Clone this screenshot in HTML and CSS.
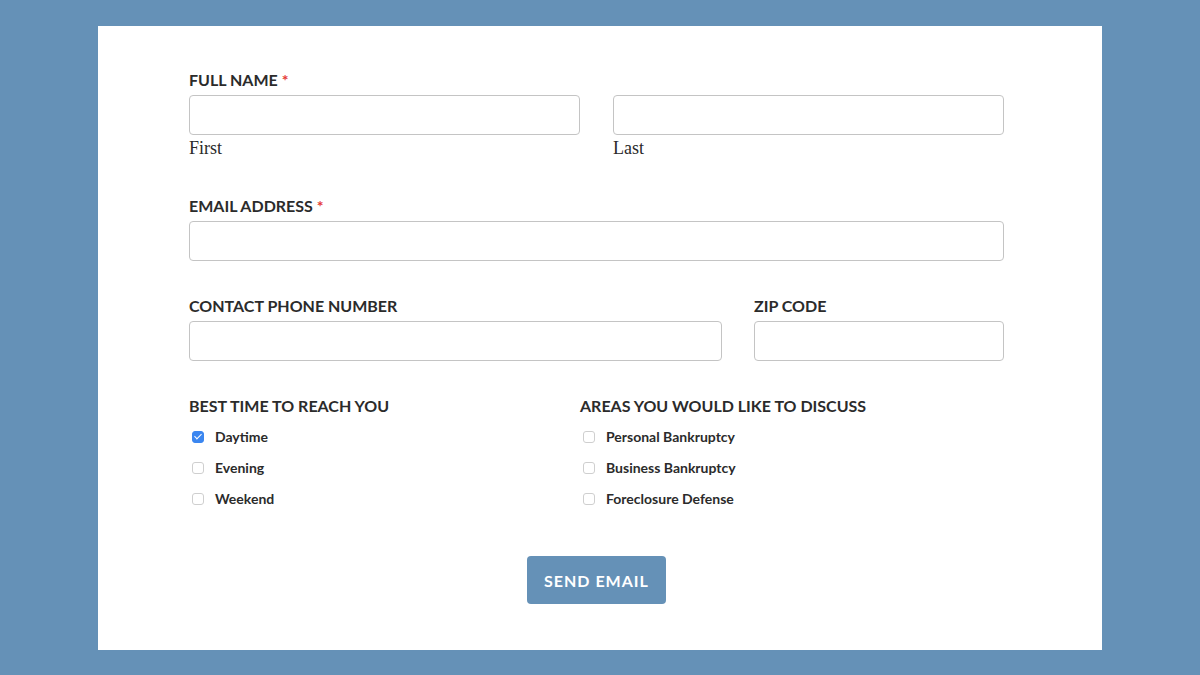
FILE: index.html
```html
<!DOCTYPE html>
<html lang="en">
<head>
    <meta charset="UTF-8">
    <meta name="viewport" content="width=device-width, initial-scale=1.0">
    <title>Contact</title>
    <link rel="stylesheet" href="styles.css">
</head>
<body>
    <form class="card">
        <div class="field">
            <label class="lbl">Full Name <span class="req">*</span></label>
            <div class="row two">
                <div>
                    <input type="text" class="txt">
                    <span class="sub">First</span>
                </div>
                <div>
                    <input type="text" class="txt">
                    <span class="sub">Last</span>
                </div>
            </div>
        </div>

        <div class="field">
            <label class="lbl">Email Address <span class="req">*</span></label>
            <input type="text" class="txt">
        </div>

        <div class="row phone">
            <div class="field">
                <label class="lbl">Contact Phone Number</label>
                <input type="text" class="txt">
            </div>
            <div class="field">
                <label class="lbl">Zip Code</label>
                <input type="text" class="txt">
            </div>
        </div>

        <div class="row checks">
            <div>
                <div class="lbl">Best Time To Reach You</div>
                <label class="chk"><input type="checkbox" checked> Daytime</label>
                <label class="chk"><input type="checkbox"> Evening</label>
                <label class="chk"><input type="checkbox"> Weekend</label>
            </div>
            <div>
                <div class="lbl">Areas You Would Like To Discuss</div>
                <label class="chk"><input type="checkbox"> Personal Bankruptcy</label>
                <label class="chk"><input type="checkbox"> Business Bankruptcy</label>
                <label class="chk"><input type="checkbox"> Foreclosure Defense</label>
            </div>
        </div>

        <div class="actions">
            <button type="button" class="send">Send Email</button>
        </div>
    </form>
</body>
</html>
```

FILE: styles.css
```css
html, body{
    margin: 0;
    height: 100%;
}
body{
    background: #6591b7;
    font-family: Lato, "Open Sans", sans-serif;
    color: #2b2b2b;
    padding-top: 26px;
    box-sizing: border-box;
}
.card{
    width: 1004px;
    height: 624px;
    margin: 0 0 0 98px;
    background: #fff;
    box-sizing: border-box;
    padding: 44px 98px 0 91px;
}
.lbl{
    display: block;
    font-size: 16px;
    font-weight: 700;
    line-height: 20px;
    text-transform: uppercase;
    margin-bottom: 5px;
}
.req{
    color: #e53935;
}
.row{
    display: grid;
    gap: 33px;
}
.two{
    grid-template-columns: 1fr 1fr;
}
.phone{
    grid-template-columns: 533px 1fr;
    gap: 32px;
}
.field{
    margin-bottom: 35px;
}
.txt{
    display: block;
    width: 100%;
    height: 40px;
    box-sizing: border-box;
    border: 1px solid #c4c4c4;
    border-radius: 4px;
    background: #fff;
}
.sub{
    display: block;
    font-family: "Liberation Serif", serif;
    font-size: 18px;
    line-height: 26px;
}
.checks{
    grid-template-columns: 391px 1fr;
    gap: 0;
}
.checks .lbl{
    margin-bottom: 5px;
}
.chk{
    display: flex;
    align-items: center;
    height: 31px;
    font-size: 14px;
    font-weight: 700;
}
.chk input{
    appearance: none;
    width: 12px;
    height: 12px;
    margin: 0 11px 0 3px;
    border: 1px solid #cfcfcf;
    border-radius: 3px;
    background: #fff;
    box-sizing: border-box;
    position: relative;
}
.chk input:checked{
    background: #3b86f0;
    border-color: #3b86f0;
}
.chk input:checked::after{
    content: "";
    position: absolute;
    left: 3px;
    top: 0px;
    width: 3px;
    height: 6px;
    border: solid #fff;
    border-width: 0 1.5px 1.5px 0;
    transform: rotate(45deg);
}
.actions{
    display: flex;
    justify-content: center;
    margin-top: 42px;
}
.send{
    width: 139px;
    height: 48px;
    border: 0;
    border-radius: 4px;
    background: #6591b7;
    color: #fff;
    font-family: Lato, sans-serif;
    font-weight: 700;
    font-size: 16px;
    letter-spacing: 1px;
    text-transform: uppercase;
}
```
